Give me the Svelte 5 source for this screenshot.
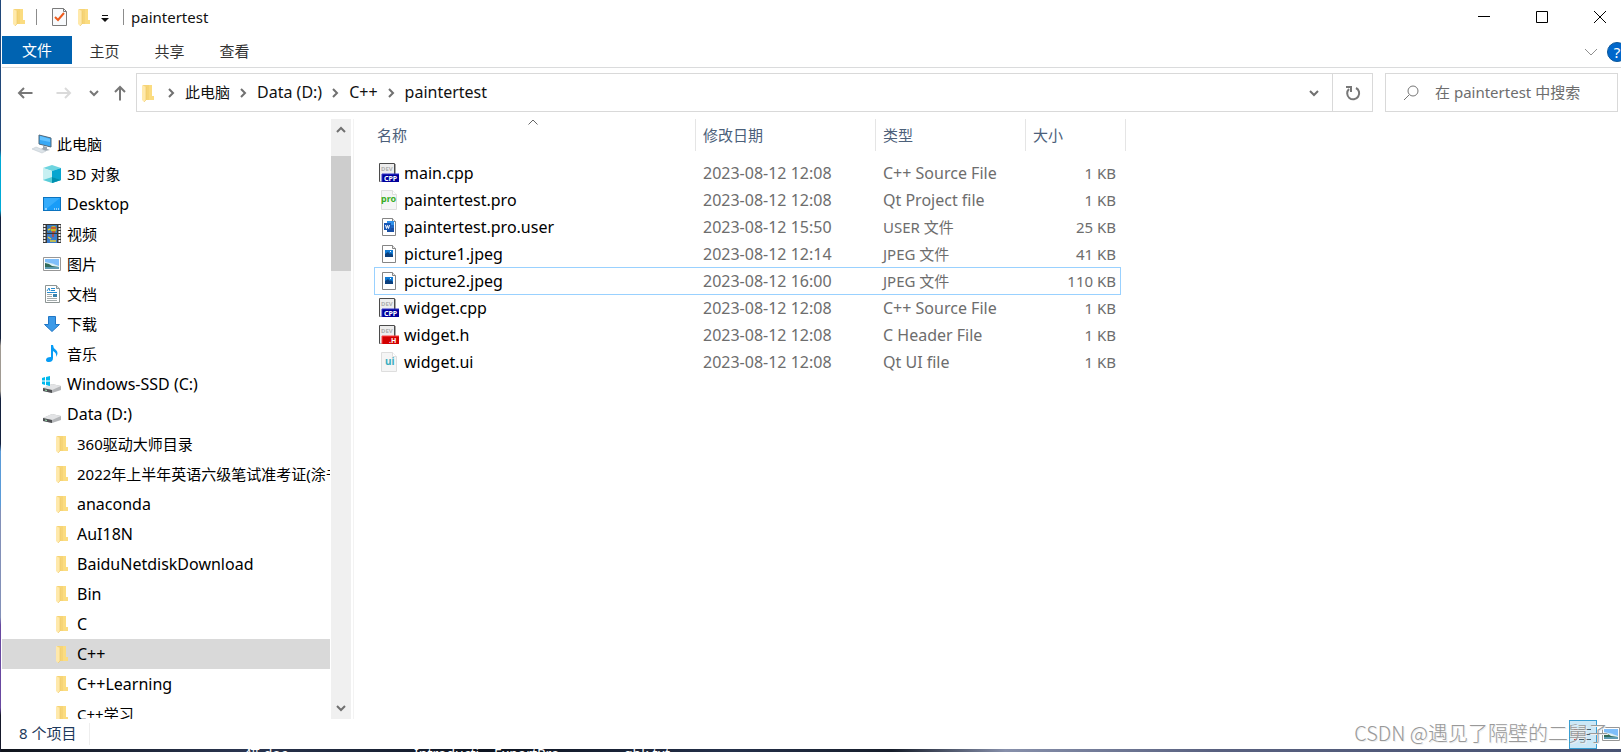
<script lang="ts">
    const ribbon = ["主页", "共享", "查看"];
    const crumbs = ["此电脑", "Data (D:)", "C++", "paintertest"];

    const tree = [
        { name: "此电脑", icon: "pc", level: 0 },
        { name: "3D 对象", icon: "cube", level: 1 },
        { name: "Desktop", icon: "desktop", level: 1 },
        { name: "视频", icon: "video", level: 1 },
        { name: "图片", icon: "photo", level: 1 },
        { name: "文档", icon: "doc", level: 1 },
        { name: "下载", icon: "download", level: 1 },
        { name: "音乐", icon: "music", level: 1 },
        { name: "Windows-SSD (C:)", icon: "system", level: 1 },
        { name: "Data (D:)", icon: "drive", level: 1 },
        { name: "360驱动大师目录", icon: "folder", level: 2 },
        { name: "2022年上半年英语六级笔试准考证(涂书", icon: "folder", level: 2 },
        { name: "anaconda", icon: "folder", level: 2 },
        { name: "AuI18N", icon: "folder", level: 2 },
        { name: "BaiduNetdiskDownload", icon: "folder", level: 2 },
        { name: "Bin", icon: "folder", level: 2 },
        { name: "C", icon: "folder", level: 2 },
        { name: "C++", icon: "folder", level: 2 },
        { name: "C++Learning", icon: "folder", level: 2 },
        { name: "C++学习", icon: "folder", level: 2 },
    ];

    const files = [
        { name: "main.cpp", icon: "cpp", date: "2023-08-12 12:08", type: "C++ Source File", size: "1 KB" },
        { name: "paintertest.pro", icon: "pro", date: "2023-08-12 12:08", type: "Qt Project file", size: "1 KB" },
        { name: "paintertest.pro.user", icon: "word", date: "2023-08-12 15:50", type: "USER 文件", size: "25 KB" },
        { name: "picture1.jpeg", icon: "jpeg", date: "2023-08-12 12:14", type: "JPEG 文件", size: "41 KB" },
        { name: "picture2.jpeg", icon: "jpeg", date: "2023-08-12 16:00", type: "JPEG 文件", size: "110 KB" },
        { name: "widget.cpp", icon: "cpp", date: "2023-08-12 12:08", type: "C++ Source File", size: "1 KB" },
        { name: "widget.h", icon: "h", date: "2023-08-12 12:08", type: "C Header File", size: "1 KB" },
        { name: "widget.ui", icon: "ui", date: "2023-08-12 12:08", type: "Qt UI file", size: "1 KB" },
    ];

    let current = $state("C++");
    let focused = $state("picture2.jpeg");
    let query = $state("");

    // latin text is set one size up from chinese text
    function isLatin(text: string) {
        return /^[\x20-\x7e]+$/.test(text);
    }
</script>

{#snippet icon(name: string)}
    <svg class="icon" width="20" height="20" viewBox="0 0 20 20" aria-hidden="true">
        {#if name === "folder"}
            <path d="M5 2h9v12l1 1v2H6z" fill="#f6d477" />
            <path d="M11 2h3v11h2v4h-5z" fill="#fbdc80" />
            <path d="M4 2l4 2v13l-2 2-2-2z" fill="#ffe9ab" />
            <path d="M8 4v13l-2 2" fill="none" stroke="#edc660" stroke-width=".6" />
        {:else if name === "pc"}
            <path d="M7 1l12 3v9L7 10z" fill="#37a8f5" stroke="#51687a" />
            <path d="M8 2l10 3v3L8 6z" fill="#62c2ff" />
            <path d="M11 12l4 1v2l3 1-5 1-4-2 2-1z" fill="#9ba7b1" />
            <path d="M0 15l4-2 10 4-4 2z" fill="#dce3e8" stroke="#b9c3ca" stroke-width=".5" />
        {:else if name === "cube"}
            <path d="M1 4l9-3 9 3-9 3z" fill="#6ed4df" />
            <path d="M1 4l9 3v12l-9-3z" fill="#c7f0f2" />
            <path d="M10 7l9-3v12l-9 3z" fill="#07a6d0" />
            <path d="M10 13L1 16l9 3 9-3z" fill="#2bbdce" opacity=".7" />
            <path d="M10 13l9 3-9 3z" fill="#008fae" />
        {:else if name === "desktop"}
            <rect x="1.5" y="3.500" width="17" height="13" fill="#189cf8" stroke="#0b73bf" />
            <path d="M2 4h16L3 16H2z" fill="#4eb9ff" opacity=".55" />
            <path d="M3 15h2M12 15h1M14 15h1M16 15h1" stroke="#fff" />
        {:else if name === "video"}
            <path d="M1 0h18v19H1z" fill="#373737" />
            <path d="M5 1h10v8H5z" fill="#3778ba" />
            <path d="M5 10h10v9H5z" fill="#3c7dcb" />
            <path d="M2.500 1v18M17.500 1v18" stroke="#f5f5f5" stroke-width="2" stroke-dasharray="2 1" />
            <circle cx="11.500" cy="5" r="3" fill="#c7bb27" />
            <path d="M9 4h5M10 8h3M11 10v3" stroke="#c9402e" stroke-width="1.500" />
            <path d="M6 6l2-1M6 13l3 2M8 17h6" stroke="#e8ce33" stroke-width="1.500" />
        {:else if name === "photo"}
            <path d="M1.500 3.500h17v13h-17z" fill="#fff" stroke="#979797" />
            <path d="M3 5h14v10H3z" fill="#7ebefa" />
            <path d="M3 8q7 1 14 4v3H3z" fill="#ddeff3" />
            <path d="M3 9l4 1 3 2 7 1v2H3z" fill="#316b59" />
            <path d="M3 13h14v2H3z" fill="#5d9bb1" />
        {:else if name === "doc"}
            <path d="M3.500 1.500h11l3 3v14h-14z" fill="#fff" stroke="#8d9594" />
            <path d="M14.500 1.500v3h3" fill="#ddd" stroke="#8d9594" />
            <path d="M5 7l2-3 1 3M9 4.500h4M9 6.500h4M5 8.500h10" stroke="#248bd0" fill="none" />
            <path d="M5 10.500h5M5 12.500h5M5 14.500h10M5 16.500h10" stroke="#a4acad" />
            <path d="M11 10h4v3h-4z" fill="#3882ad" />
        {:else if name === "download"}
            <path d="M6.500 2.500h7v8h4l-7.500 7-7.500-7h4z" fill="#3b9ae8" stroke="#2176c5" />
        {:else if name === "music"}
            <path d="M9 1h2q0 3 3 5 3 3 0 7 1-4-3-6v7q0 4-4 4-3 0-3-2 0-3 5-3z" fill="#079cf5" />
        {:else if name === "system" || name === "drive"}
            <path d="M1 14l9-4 9 2v4l-9 3-9-2z" fill="#b4b6b9" />
            <path d="M1 14l9-4 9 2-9 4z" fill="#e2e3e5" />
            <path d="M1 14l9 2v3l-9-2z" fill="#505255" />
            <path d="M3 16l2 .500" stroke="#9ce5b2" />
            {#if name === "system"}
                <path d="M0 4l3-1v3.500H0zM4 3l4-1v4.500H4zM0 7.500h3V11l-3-1zM4 7.500h4V12l-4-1z" fill="#00b9ed" />
            {/if}
        {:else if name === "cpp" || name === "h"}
            <path d="M.5.500h15v18H.5z" fill="#ededed" stroke="#4b4b4b" />
            <path d="M1 18.500h15.500V1" fill="none" stroke="#aaa" />
            <text x="2" y="8" class="glyph" font-size="6" fill="#adadad">DEV</text>
            <path d="M3 11h17v8H3z" fill={name === "cpp" ? "#00009b" : "#d20000"} />
            <path d="M3 19V11h17" fill="none" stroke={name === "cpp" ? "#3434c9" : "#ff4343"} />
            {#if name === "cpp"}
                <text x="5" y="18" class="glyph" font-size="7" fill="#fff">CPP</text>
            {:else}
                <text x="10" y="18" class="glyph" font-size="7" fill="#fff">.H</text>
            {/if}
        {:else if name === "pro" || name === "ui"}
            <path d="M2.500.5h11l4 4v15h-15z" fill="#f5f5f5" stroke="#dedede" />
            <path d="M13.500.5v4h4" fill="#fff" stroke="#dedede" />
            {#if name === "pro"}
                <text x="2" y="12" class="glyph" font-size="9" fill="#39ad25">pro</text>
            {:else}
                <text x="6" y="13" class="glyph" font-size="10" fill="#3daec0">ui</text>
            {/if}
        {:else}
            <path d="M3.500 1.500h10l3 3v14h-13z" fill="#fff" stroke="#858585" />
            <path d="M13.500 1.500v3h3" fill="#eee" stroke="#858585" />
            {#if name === "word"}
                <path d="M8 4h7v11H8z" fill="#2f8fe8" />
                <path d="M8 8h7v3H8z" fill="#1e66c3" />
                <path d="M8 11h7v4H8z" fill="#164da3" />
                <path d="M5 6h7v7H5z" fill="#1857b5" />
                <path d="M6.500 8l1 3.500 1-3 1 3 1-3.500" fill="none" stroke="#fff" />
            {:else}
                <path d="M6 6h8v7H6z" fill="#137bd4" />
                <path d="M6 13v-3l3-2 2 2 1-1 2 2v2z" fill="#0b407e" />
                <path d="M11 7h1v1h-1z" fill="#fff" />
            {/if}
        {/if}
    </svg>
{/snippet}

{#snippet chevron(dir: string)}
    <svg class="chevron {dir}" width="12" height="12" viewBox="0 0 12 12" aria-hidden="true">
        <path d="M2 4l4 4 4-4" />
    </svg>
{/snippet}

<div class="desktop">
    <div class="window">
        <header class="titlebar">
            {@render icon("folder")}
            <span class="line"></span>
            <button class="plain check" aria-label="属性">
                <svg width="16" height="18" viewBox="0 0 16 18">
                    <path d="M.5.500h11l3 3v14H.5z" fill="#f8fafc" stroke="#7b7b7b" />
                    <path d="M11.500.5v3h3" fill="none" stroke="#7b7b7b" />
                    <path d="M3 9l3 3 6-7" fill="none" stroke="#ed5a1c" stroke-width="2" />
                </svg>
            </button>
            <button class="plain" aria-label="新建文件夹">{@render icon("folder")}</button>
            <button class="plain more" aria-label="自定义快速访问工具栏">
                <svg width="8" height="10" viewBox="0 0 8 10">
                    <path d="M1 3.500h6" stroke="#111" />
                    <path d="M0 6h8L4 10z" fill="#111" />
                </svg>
            </button>
            <span class="line"></span>
            <h1>paintertest</h1>
            <div class="controls">
                <button class="plain" aria-label="最小化">
                    <svg width="14" height="14" viewBox="0 0 14 14"><path d="M1 6.500h12" /></svg>
                </button>
                <button class="plain" aria-label="最大化">
                    <svg width="14" height="14" viewBox="0 0 14 14"><path d="M1.500 1.500h11v11h-11z" /></svg>
                </button>
                <button class="plain" aria-label="关闭">
                    <svg width="14" height="14" viewBox="0 0 14 14"><path d="M1 1l12 12M13 1L1 13" /></svg>
                </button>
            </div>
        </header>

        <nav class="ribbon">
            <button class="file">文件</button>
            {#each ribbon as tab}
                <button class="tab">{tab}</button>
            {/each}
            <button class="plain expand" aria-label="展开功能区">
                <svg width="14" height="10" viewBox="0 0 14 10"><path d="M1 2l6 6 6-6" /></svg>
            </button>
            <button class="help" aria-label="帮助">?</button>
        </nav>

        <div class="address">
            <button class="plain nav back" aria-label="后退">
                <svg width="16" height="16" viewBox="0 0 16 16"><path d="M15.500 8H1.500M7 3L2 8l5 5" /></svg>
            </button>
            <button class="plain nav forward" aria-label="前进" disabled>
                <svg width="16" height="16" viewBox="0 0 16 16"><path d="M.5 8h14M9 3l5 5-5 5" /></svg>
            </button>
            <button class="plain nav recent" aria-label="最近浏览的位置">{@render chevron("down")}</button>
            <button class="plain nav up" aria-label="上移">
                <svg width="16" height="16" viewBox="0 0 16 16"><path d="M8 15.500V2M3 7l5-5 5 5" /></svg>
            </button>
            <div class="path">
                {@render icon("folder")}
                {#each crumbs as crumb}
                    {@render chevron("right")}
                    <button class="plain crumb" class:latin={isLatin(crumb)}>{crumb}</button>
                {/each}
                <button class="plain history" aria-label="上一个位置">{@render chevron("down")}</button>
                <button class="plain refresh" aria-label="刷新">
                    <svg width="16" height="16" viewBox="0 0 16 16">
                        <path d="M11 3a6 6 0 1 1-7 1M1 2h5v5" />
                    </svg>
                </button>
            </div>
            <label class="search">
                <svg width="16" height="16" viewBox="0 0 16 16" aria-hidden="true">
                    <circle cx="10" cy="6" r="5" /><path d="M6 10l-5 5" />
                </svg>
                <input type="text" bind:value={query} placeholder="在 paintertest 中搜索" aria-label="搜索" />
            </label>
        </div>

        <main>
            <aside>
                <div class="tree">
                    {#each tree as item}
                        <button
                            class="node level{item.level}"
                            class:current={item.name === current}
                            class:latin={isLatin(item.name)}
                            onclick={() => (current = item.name)}
                        >
                            {@render icon(item.icon)}
                            <span>{item.name}</span>
                        </button>
                    {/each}
                </div>
                <div class="scrollbar">
                    <button class="plain" aria-label="向上滚动">{@render chevron("top")}</button>
                    <div class="track"><div class="thumb"></div></div>
                    <button class="plain" aria-label="向下滚动">{@render chevron("down")}</button>
                </div>
            </aside>

            <section class="files">
                <table>
                    <thead>
                        <tr>
                            <th class="name">
                                <div>名称
                                    <svg class="sort" width="10" height="6" viewBox="0 0 10 6"><path d="M.5 5.500L5 1l4.500 4.500" /></svg>
                                </div>
                            </th>
                            <th class="date"><div>修改日期</div></th>
                            <th class="type"><div>类型</div></th>
                            <th class="size"><div>大小</div></th>
                        </tr>
                    </thead>
                    <tbody>
                        {#each files as file}
                            <tr class:focused={file.name === focused} onclick={() => (focused = file.name)}>
                                <td class="name latin"><div>{@render icon(file.icon)}{file.name}</div></td>
                                <td class="latin">{file.date}</td>
                                <td class:latin={isLatin(file.type)}>{file.type}</td>
                                <td class="size">{file.size}</td>
                            </tr>
                        {/each}
                    </tbody>
                </table>
            </section>
        </main>

        <footer>
            <span class="count">{files.length} 个项目</span>
            <div class="views">
                <button class="plain details" aria-label="详细信息">
                    <svg width="20" height="18" viewBox="0 0 20 18">
                        <path d="M1 4.500h3M1 9.500h3M1 14.500h3" stroke="#d04a30" />
                        <path d="M6 4.500h5M13 4.500h5M6 9.500h5M13 9.500h5M6 14.500h5M13 14.500h5" stroke="#4a6070" />
                    </svg>
                </button>
                <button class="plain" aria-label="大图标">{@render icon("photo")}</button>
            </div>
        </footer>
    </div>
    <div class="behind">
        <span>猫.doc</span>
        <span>Introducti</span>
        <span>ExportPro</span>
        <span>gbk.txt</span>
    </div>
    <div class="watermark">CSDN @遇见了隔壁的二舅子</div>
</div>

<style>
    :global(body) {
        background: #fff;
    }
    .desktop {
        position: relative;
        display: flex;
        flex-direction: column;
        height: 100vh;
        overflow: hidden;
        box-sizing: border-box;
        border-left: 1px solid #34466b;
        border-image: linear-gradient(#20487a 0 20%, #00a9d6 21% 28%, #14213d 29% 45%, #a09a92 46% 52%, #13203d 53% 59%, #5a9bd8 60% 67%, #8290b8 68% 82%, #6848a0 83% 94%, #15182a 95%) 1;
        font-family: "Noto Sans", "Noto Sans CJK SC", sans-serif;
        font-size: 15px;
        line-height: 20px;
        color: #111;
    }
    .window {
        flex: 1;
        min-height: 0;
        display: flex;
        flex-direction: column;
        padding-left: 1px;
        background: #fff;
    }
    button,
    input {
        font: inherit;
        color: inherit;
    }
    .latin {
        font-size: 16px;
    }
    .plain {
        display: flex;
        align-items: center;
        justify-content: center;
        padding: 0;
        border: none;
        background: none;
    }
    svg {
        flex: none;
        display: block;
    }
    .glyph {
        font-family: "Noto Sans", sans-serif;
        font-weight: 700;
    }
    .chevron path {
        fill: none;
        stroke: #707070;
        stroke-width: 2;
    }
    .right {
        transform: rotate(-90deg);
    }
    .top {
        transform: rotate(180deg);
    }

    .titlebar {
        display: flex;
        align-items: center;
        height: 34px;
        padding: 0 0 2px 7px;
    }
    .titlebar .line {
        width: 1px;
        height: 16px;
        margin: 0 7px;
        background: #8c8c8c;
    }
    .check {
        margin: 0 6px 0 8px;
    }
    .more {
        width: 22px;
    }
    h1 {
        margin: 0;
        font-size: 15px;
        font-weight: 400;
    }
    .controls {
        display: flex;
        margin: 0 -8px 0 auto;
    }
    .controls button {
        width: 58px;
        height: 34px;
    }
    .controls path {
        fill: none;
        stroke: #000;
    }

    .ribbon {
        display: flex;
        align-items: center;
        height: 31px;
        border-bottom: 1px solid #dadbdc;
    }
    .file {
        align-self: flex-start;
        width: 70px;
        height: 28px;
        padding: 0;
        border: none;
        background: #0063b1;
        color: #fff;
    }
    .tab {
        width: 65px;
        padding: 0 0 2px;
        border: none;
        background: none;
        color: #333;
    }
    .expand {
        margin-left: auto;
    }
    .expand path {
        fill: none;
        stroke: #909090;
    }
    .help {
        width: 20px;
        height: 20px;
        margin: 0 -6px 0 9px;
        padding: 0;
        border: 1px solid #0a579a;
        border-radius: 50%;
        background: #0067cb;
        color: #fff;
        font-size: 15px;
        line-height: 18px;
    }

    .address {
        display: flex;
        align-items: center;
        padding: 5px 3px 7px 15px;
    }
    .nav {
        width: 16px;
    }
    .nav path {
        fill: none;
        stroke: #777;
        stroke-width: 2;
    }
    .back {
        margin-right: 23px;
    }
    .forward {
        margin-right: 14px;
    }
    .forward path {
        stroke: #dadada;
    }
    .recent {
        margin-right: 10px;
    }
    .up {
        margin-right: 8px;
    }
    .path {
        flex: 1;
        display: flex;
        align-items: center;
        height: 37px;
        padding-left: 1px;
        border: 1px solid #d9d9d9;
    }
    .path > .right {
        margin: 0 8px 0 7px;
    }
    .crumb {
        padding-bottom: 2px;
        white-space: nowrap;
    }
    .history {
        width: 36px;
        height: 37px;
        margin-left: auto;
    }
    .refresh {
        width: 40px;
        height: 37px;
        border-left: 1px solid #d9d9d9;
    }
    .refresh path {
        fill: none;
        stroke: #777;
        stroke-width: 2;
    }
    .search {
        display: flex;
        align-items: center;
        gap: 16px;
        width: 214px;
        height: 37px;
        margin-left: 12px;
        padding-left: 17px;
        border: 1px solid #d9d9d9;
    }
    .search svg {
        fill: none;
        stroke: #767676;
    }
    .search input {
        flex: 1;
        min-width: 0;
        padding: 0 0 2px;
        border: none;
        outline: none;
        background: none;
    }
    .search input::placeholder {
        color: #6d6d6d;
        opacity: 1;
    }

    main {
        flex: 1;
        min-height: 0;
        display: flex;
    }
    aside {
        display: flex;
        width: 351px;
        border-right: 1px solid #f3f3f3;
    }
    .tree {
        flex: 1;
        min-width: 0;
        padding-top: 10px;
        overflow: hidden;
    }
    .node {
        display: flex;
        align-items: center;
        gap: 5px;
        width: 100%;
        height: 30px;
        padding: 0 0 0 30px;
        border: none;
        background: none;
        color: #000;
        white-space: nowrap;
        overflow: hidden;
    }
    .level1 {
        padding-left: 40px;
    }
    .level2 {
        padding-left: 50px;
    }
    .current {
        background: #d9d9d9;
    }
    .scrollbar {
        display: flex;
        flex-direction: column;
        width: 20px;
        margin: 0 2px 0 1px;
        background: #f0f0f0;
    }
    .scrollbar button {
        height: 22px;
    }
    .track {
        flex: 1;
        padding-top: 15px;
    }
    .thumb {
        height: 115px;
        background: #cdcdcd;
    }

    .files {
        flex: 1;
        padding-left: 20px;
    }
    table {
        table-layout: fixed;
        width: 752px;
        border-collapse: collapse;
        color: #6d6d6d;
    }
    th {
        padding: 0 0 8px;
        font-weight: 400;
        text-align: left;
        color: #4c607a;
    }
    th div {
        position: relative;
        height: 32px;
        padding-left: 7px;
        border-right: 1px solid #e5e5e5;
        line-height: 32px;
    }
    th.name {
        width: 322px;
    }
    th.name div {
        padding-left: 3px;
    }
    th.date {
        width: 180px;
    }
    th.type {
        width: 150px;
    }
    .sort {
        position: absolute;
        top: 0;
        left: 50%;
        margin-left: -7px;
        fill: none;
        stroke: #666;
    }
    tbody tr {
        position: relative;
        height: 27px;
    }
    td {
        padding: 0 0 0 7px;
        white-space: nowrap;
    }
    td.name {
        padding-left: 5px;
        color: #000;
    }
    td.name div {
        display: flex;
        align-items: center;
        gap: 5px;
    }
    td.size {
        padding-right: 10px;
        text-align: right;
    }
    .focused .name::after {
        content: "";
        position: absolute;
        inset: 0 5px -1px 0;
        border: 1px solid #99d1ff;
    }

    footer {
        display: flex;
        align-items: center;
        height: 30px;
        color: #1e395b;
    }
    .count {
        padding: 0 13px 2px 17px;
        border-right: 1px solid #eee;
    }
    .views {
        display: flex;
        gap: 4px;
        margin-left: auto;
    }
    .details {
        width: 28px;
        height: 29px;
        border: 1px solid #3a9fd4;
        background: #cce8f7;
    }
    .behind {
        display: grid;
        grid-template-columns: 168px 80px 130px 1fr;
        height: 3px;
        padding-left: 245px;
        overflow: hidden;
        font-size: 14px;
        line-height: 10px;
        color: #fff;
        background: linear-gradient(90deg, #10141c, #2a3550 15%, #0d1420 30%, #24304a 45%, #161d2a 55%, #8790ab 62%, #58607f 75%, #485272);
    }
    .watermark {
        position: absolute;
        right: 13px;
        bottom: 5px;
        font-family: "Noto Sans CJK SC", sans-serif;
        font-size: 20px;
        line-height: 28px;
        font-weight: 300;
        color: #999;
        text-shadow: 1px 1px 0 #eee;
        pointer-events: none;
    }
</style>
